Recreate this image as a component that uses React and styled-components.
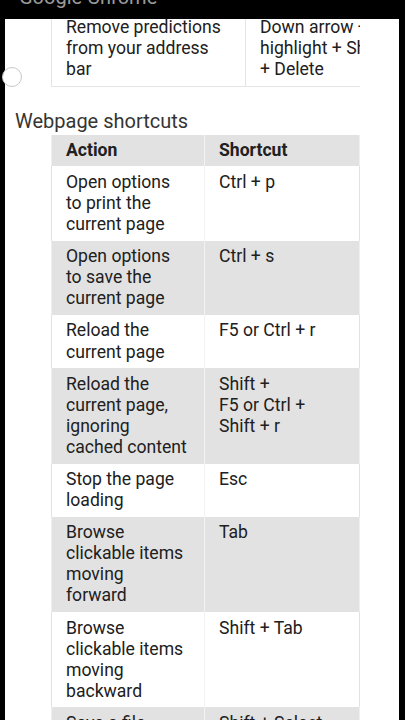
import React from "react";
import styled, { createGlobalStyle } from "styled-components";

const Global = createGlobalStyle`
  html, body { margin: 0; padding: 0; background: #000; overflow: hidden; }
  body { font-family: Roboto, "Noto Sans", "Liberation Sans", sans-serif; }
`;

const Screen = styled.div`
  position: relative;
  width: 405px;
  height: 720px;
  background: #000;
  display: flex;
  flex-direction: column;
  overflow: hidden;
`;

const TitleBar = styled.div`
  height: 19px;
  flex: none;
  overflow: hidden;
  padding-left: 19px;
  color: #9a9a9a;
  font-size: 20px;
  line-height: 24px;
`;

const TitleText = styled.div`
  margin-top: -15px;
`;

const Panel = styled.div`
  flex: 1;
  margin: 0 6px 0 5px;
  background: #fff;
  overflow: hidden;
  color: #202020;
  font-size: 17.6px;
  line-height: 21.1px;
`;

const UpperClip = styled.div`
  margin: -7.5px 0 0 46px;
  width: 309px;
  overflow: hidden;
`;

const UpperRow = styled.div`
  display: flex;
  width: 420px;
  border-left: 1px solid #e4e4e4;
  border-bottom: 1px solid #e4e4e4;
`;

const UpperCell = styled.div`
  flex: none;
  width: ${(p) => p.$w}px;
  box-sizing: border-box;
  padding: 5.5px 14px;
  white-space: nowrap;
  border-left: ${(p) => (p.$divider ? "1px solid #e4e4e4" : "none")};
`;

const Heading = styled.h2`
  margin: 22px 0 2px 10px;
  font-weight: 400;
  font-size: 20px;
  line-height: 24px;
  color: #353535;
`;

const Table = styled.div`
  margin-left: 46px;
  width: 309px;
  display: flex;
  flex-direction: column;
`;

const Row = styled.div`
  display: grid;
  grid-template-columns: 153px 156px;
  background: ${(p) => (p.$shaded ? "#e2e2e2" : "#fff")};
  font-weight: ${(p) => (p.$head ? 700 : 400)};
`;

const Cell = styled.div`
  padding: ${(p) => (p.$head ? "5.5px 14px 5px" : "5.5px 14px")};
  white-space: nowrap;
  border-left: 1px solid ${(p) => (p.$shaded ? "#efefef" : "#e2e2e2")};
  border-right: ${(p) => (p.$last ? `1px solid ${p.$shaded ? "#efefef" : "#e2e2e2"}` : "none")};
  & + & {
    border-left: 1px solid ${(p) => (p.$shaded ? "#f2f2f2" : "#e2e2e2")};
  }
`;

const Handle = styled.div`
  position: absolute;
  left: 2px;
  top: 67px;
  width: 18px;
  height: 18px;
  border-radius: 50%;
  background: #fff;
  border: 1px solid #c9c9c9;
`;

const rows = [
  [["Open options", "to print the", "current page"], ["Ctrl + p"]],
  [["Open options", "to save the", "current page"], ["Ctrl + s"]],
  [["Reload the", "current page"], ["F5 or Ctrl + r"]],
  [["Reload the", "current page,", "ignoring", "cached content"], ["Shift +", "F5 or Ctrl +", "Shift + r"]],
  [["Stop the page", "loading"], ["Esc"]],
  [["Browse", "clickable items", "moving", "forward"], ["Tab"]],
  [["Browse", "clickable items", "moving", "backward"], ["Shift + Tab"]],
  [["Save a file", "link"], ["Shift + Select"]],
];

const Lines = ({ lines }) =>
  lines.map((l, i) => (
    <React.Fragment key={i}>
      {i > 0 && <br />}
      {l}
    </React.Fragment>
  ));

export default function App() {
  return (
    <>
      <Global />
      <Screen>
        <TitleBar>
          <TitleText>Google Chrome</TitleText>
        </TitleBar>
        <Panel>
          <UpperClip>
            <UpperRow>
              <UpperCell $w={193}>
                <Lines lines={["Remove predictions", "from your address", "bar"]} />
              </UpperCell>
              <UpperCell $w={200} $divider>
                <Lines lines={["Down arrow +", "highlight + Shift", "+ Delete"]} />
              </UpperCell>
            </UpperRow>
          </UpperClip>
          <Heading>Webpage shortcuts</Heading>
          <Table>
            <Row $shaded $head>
              <Cell $head $shaded>Action</Cell>
              <Cell $head $shaded $last>Shortcut</Cell>
            </Row>
            {rows.map(([a, s], i) => {
              const shaded = i % 2 === 1;
              return (
                <Row key={i} $shaded={shaded}>
                  <Cell $shaded={shaded}>
                    <Lines lines={a} />
                  </Cell>
                  <Cell $shaded={shaded} $last>
                    <Lines lines={s} />
                  </Cell>
                </Row>
              );
            })}
          </Table>
        </Panel>
        <Handle />
      </Screen>
    </>
  );
}
